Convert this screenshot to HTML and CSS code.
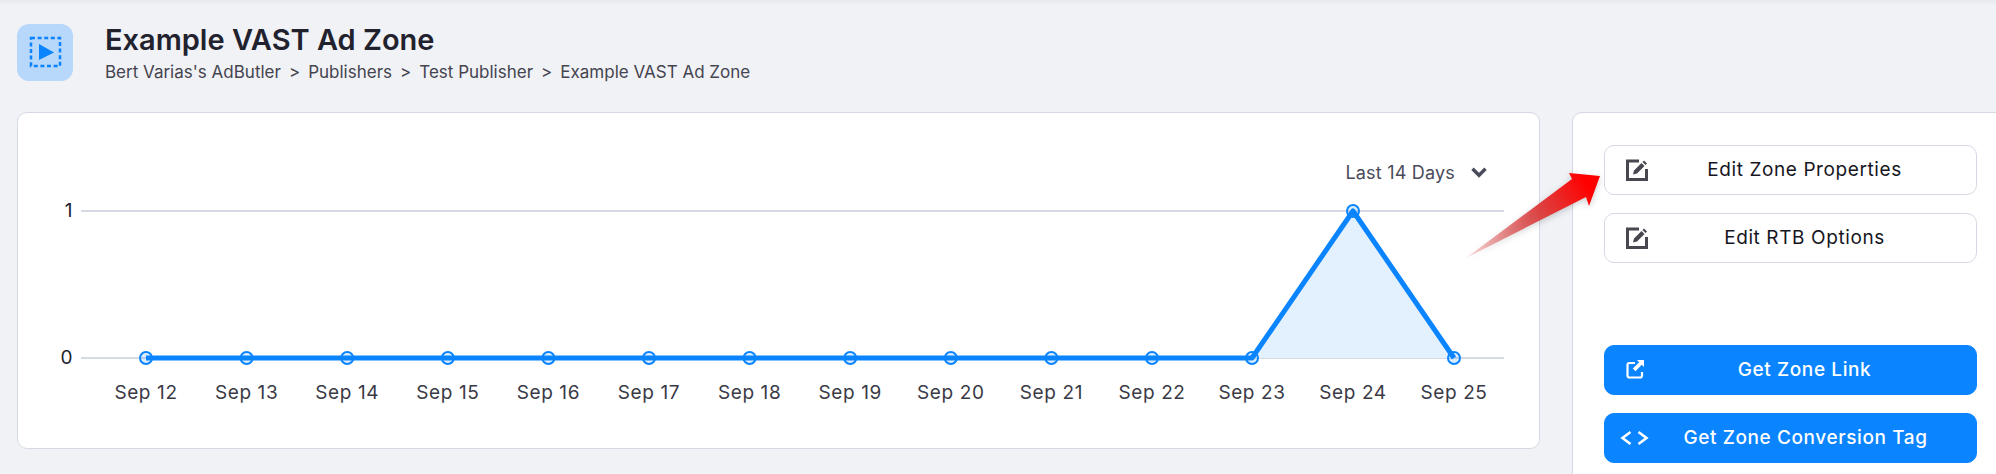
FILE: index.html
```html
<!DOCTYPE html>
<html lang="en">

<head>
  <meta charset="UTF-8">
  <title>Example VAST Ad Zone</title>
  <link rel="stylesheet" href="styles.css">
</head>

<body>
  <header class="pageHead">
    <div class="zoneIcon">
      <svg width="56" height="57" viewBox="0 0 56 57">
        <rect x="14" y="14" width="29" height="28" fill="none" stroke="#0a84ff" stroke-width="2.5" stroke-dasharray="4 2.6"/>
        <path d="M22 20 L37 28.5 L22 36 Z" fill="#0a84ff"/>
      </svg>
    </div>
    <div class="titles">
      <h1>Example VAST Ad Zone</h1>
      <p class="crumbs">
        <span>Bert Varias's AdButler</span><i>&gt;</i><span>Publishers</span><i>&gt;</i><span>Test Publisher</span><i>&gt;</i><span>Example VAST Ad Zone</span>
      </p>
    </div>
  </header>

  <main class="content">
    <section class="card">
      <div class="range">
        <span>Last 14 Days</span>
        <svg width="16" height="11" viewBox="0 0 16 11">
          <path d="M1.5 1.8 L8 8.3 L14.5 1.8" fill="none" stroke="#4a4b5a" stroke-width="3.4"/>
        </svg>
      </div>
      <svg class="chart" width="1521" height="264" viewBox="0 0 1521 264">
        <line class="grid" x1="63" y1="27" x2="1486" y2="27"/>
        <line class="grid" x1="63" y1="174" x2="1486" y2="174"/>
        <text class="yLabel" x="55" y="33">1</text>
        <text class="yLabel" x="55" y="180">0</text>

        <path class="area" d="M1234 174 L1335 27 L1436 174 Z"/>
        <path class="line" d="M128 174 H1234 L1335 27 L1436 174"/>

        <circle class="dot" cx="128" cy="174" r="6"/>
        <circle class="dot" cx="228.6" cy="174" r="6"/>
        <circle class="dot" cx="329.2" cy="174" r="6"/>
        <circle class="dot" cx="429.8" cy="174" r="6"/>
        <circle class="dot" cx="530.4" cy="174" r="6"/>
        <circle class="dot" cx="631" cy="174" r="6"/>
        <circle class="dot" cx="731.6" cy="174" r="6"/>
        <circle class="dot" cx="832.2" cy="174" r="6"/>
        <circle class="dot" cx="932.8" cy="174" r="6"/>
        <circle class="dot" cx="1033.4" cy="174" r="6"/>
        <circle class="dot" cx="1134" cy="174" r="6"/>
        <circle class="dot" cx="1234" cy="174" r="6"/>
        <circle class="dot" cx="1335" cy="27" r="6"/>
        <circle class="dot" cx="1436" cy="174" r="6"/>

        <text class="xLabel" x="128" y="215">Sep 12</text>
        <text class="xLabel" x="228.6" y="215">Sep 13</text>
        <text class="xLabel" x="329.2" y="215">Sep 14</text>
        <text class="xLabel" x="429.8" y="215">Sep 15</text>
        <text class="xLabel" x="530.4" y="215">Sep 16</text>
        <text class="xLabel" x="631" y="215">Sep 17</text>
        <text class="xLabel" x="731.6" y="215">Sep 18</text>
        <text class="xLabel" x="832.2" y="215">Sep 19</text>
        <text class="xLabel" x="932.8" y="215">Sep 20</text>
        <text class="xLabel" x="1033.4" y="215">Sep 21</text>
        <text class="xLabel" x="1134" y="215">Sep 22</text>
        <text class="xLabel" x="1234" y="215">Sep 23</text>
        <text class="xLabel" x="1335" y="215">Sep 24</text>
        <text class="xLabel" x="1436" y="215">Sep 25</text>
      </svg>
    </section>

    <aside class="panel">
      <div class="btnGroup">
        <a class="btn">
          <svg class="btnIcon" width="22" height="22" viewBox="0 0 22 22">
            <path d="M13 2 H1.5 V20.5 H20.5 V10" fill="none" stroke="#4a4650" stroke-width="3"/>
            <path d="M7 15.5 L8 11.5 L15.5 4 L18.5 7 L11 14.5 Z M16.5 3 L18 1.5 L21 4.5 L19.5 6 Z" fill="#4a4650"/>
          </svg>
          <span>Edit Zone Properties</span>
        </a>
        <a class="btn">
          <svg class="btnIcon" width="22" height="22" viewBox="0 0 22 22">
            <path d="M13 2 H1.5 V20.5 H20.5 V10" fill="none" stroke="#4a4650" stroke-width="3"/>
            <path d="M7 15.5 L8 11.5 L15.5 4 L18.5 7 L11 14.5 Z M16.5 3 L18 1.5 L21 4.5 L19.5 6 Z" fill="#4a4650"/>
          </svg>
          <span>Edit RTB Options</span>
        </a>
      </div>
      <div class="btnGroup lower">
        <a class="btn primary">
          <svg class="btnIcon" width="22" height="22" viewBox="0 0 22 22">
            <path d="M9 4 H3.5 Q1.5 4 1.5 6 V16.5 Q1.5 18.5 3.5 18.5 H14 Q16 18.5 16 16.5 V13" fill="none" stroke="#fff" stroke-width="2.2"/>
            <path d="M11 1 H18 V8 L15.8 5.8 L9.5 12.2 L6.8 9.5 L13.2 3.2 Z" fill="#fff"/>
          </svg>
          <span>Get Zone Link</span>
        </a>
        <a class="btn primary">
          <svg class="btnIcon tagIcon" width="29" height="16" viewBox="0 0 29 16">
            <path d="M10.5 2 L2.5 8 L10.5 14 M18.5 2 L26.5 8 L18.5 14" fill="none" stroke="#fff" stroke-width="2.6"/>
          </svg>
          <span>Get Zone Conversion Tag</span>
        </a>
      </div>
    </aside>
  </main>

  <!-- annotation arrow on top of the screenshot -->
  <svg class="arrow" width="150" height="100" viewBox="0 0 150 100">
    <defs>
      <linearGradient id="arrowFill" x1="0" y1="97" x2="130" y2="15" gradientUnits="userSpaceOnUse">
        <stop offset="0" stop-color="#d62a2a" stop-opacity="0.1"/>
        <stop offset="0.6" stop-color="#dc3a3a" stop-opacity="0.95"/>
        <stop offset="0.95" stop-color="#ff0000"/>
      </linearGradient>
    </defs>
    <path d="M6 98 L112 19 L109 13 L140 16 L129 46 L126 37 Z" fill="url(#arrowFill)"/>
  </svg>
</body>

</html>
```

FILE: styles.css
```css
* {
  margin: 0;
  padding: 0;
  box-sizing: border-box;
}

html,
body {
  height: 474px;
  overflow: hidden;
}

body {
  position: relative;
  background: linear-gradient(#e8e9ed, #f1f2f6 5px);
  font-family: "Inter", "Liberation Sans", sans-serif;
  color: #22222e;
}

.pageHead {
  display: flex;
  gap: 32px;
  height: 112px;
  padding: 24px 0 0 17px;
}

.zoneIcon {
  flex: none;
  width: 56px;
  height: 57px;
  border-radius: 12px;
  background-color: #b7d7fb;
}

.titles h1 {
  font-size: 29px;
  line-height: 32px;
  font-weight: 600;
}

.crumbs {
  display: flex;
  margin-top: 5px;
  font-size: 17px;
  line-height: 22px;
  color: #44444f;
}

.crumbs i {
  margin: 0 8px;
  font-style: normal;
}

.content {
  display: flex;
  gap: 32px;
  padding-left: 17px;
}

.card {
  flex: none;
  width: 1523px;
  height: 337px;
  border: 1px solid #d5d9e4;
  border-radius: 10px;
  background-color: #fff;
}

.range {
  display: flex;
  justify-content: flex-end;
  align-items: center;
  gap: 16px;
  height: 24px;
  margin-top: 47px;
  padding-right: 52px;
  font-size: 18px;
  letter-spacing: 0.2px;
  color: #4a4b5a;
}

.chart {
  display: block;
}

.grid {
  stroke: #d5d9e4;
  stroke-width: 2;
}

.area {
  fill: #e3f0fd;
}

.line {
  fill: none;
  stroke: #0a84ff;
  stroke-width: 5;
  stroke-linejoin: round;
}

.dot {
  fill: rgba(10, 132, 255, 0.15);
  stroke: #0a84ff;
  stroke-width: 2;
}

.xLabel,
.yLabel {
  font-size: 19px;
  letter-spacing: 0.6px;
  fill: #3a3a46;
}

.xLabel {
  text-anchor: middle;
}

.yLabel {
  text-anchor: end;
  fill: #22222e;
}

.panel {
  flex: none;
  width: 450px;
  height: 400px;
  padding: 32px 0 0 31px;
  border: 1px solid #d5d9e4;
  border-radius: 10px;
  background-color: #fff;
}

.btnGroup {
  display: flex;
  flex-direction: column;
  gap: 18px;
  width: 373px;
}

.btnGroup.lower {
  margin-top: 82px;
}

.btn {
  display: flex;
  align-items: center;
  height: 50px;
  padding-left: 21px;
  border: 1px solid #d5d9e4;
  border-radius: 10px;
  font-size: 19px;
  letter-spacing: 0.6px;
  color: #16161e;
}

.btn span {
  flex: 1;
  margin-bottom: 2px;
  text-align: center;
}

.btnIcon {
  flex: none;
  margin-right: -15px;
}

.tagIcon {
  margin-left: -6px;
  margin-right: -14px;
}

.btn.primary {
  border-color: #0a84ff;
  background-color: #0a84ff;
  color: #fff;
  font-weight: 500;
}

.arrow {
  position: absolute;
  left: 1460px;
  top: 160px;
  filter: drop-shadow(0 2px 3px rgba(0, 0, 0, 0.2));
}
```
